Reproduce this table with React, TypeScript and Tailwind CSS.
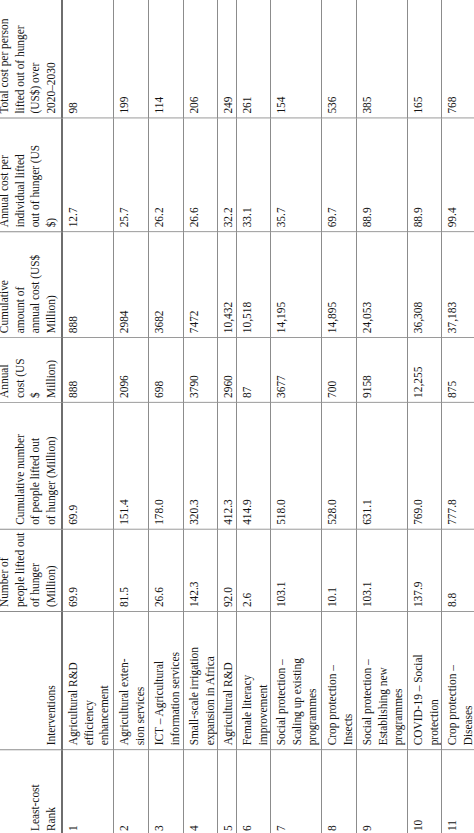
// Least-cost interventions table, printed sideways (rotated a quarter turn counter-clockwise)

const HEADERS: string[][] = [
  ["Least-cost", "Rank"],
  ["Interventions"],
  ["Number of", "people lifted out", "of hunger", "(Million)"],
  ["Cumulative number", "of people lifted out", "of hunger (Million)"],
  ["Annual", "cost (US", "$", "Million)"],
  ["Cumulative", "amount of", "annual cost (US$", "Million)"],
  ["Annual cost per", "individual lifted", "out of hunger (US", "$)"],
  ["Total cost per person", "lifted out of hunger", "(US$) over", "2020–2030"],
];

type Row = [string, string[], string, string, string, string, string, string];

const ROWS: Row[] = [
  ["1", ["Agricultural R&D", "efficiency", "enhancement"], "69.9", "69.9", "888", "888", "12.7", "98"],
  ["2", ["Agricultural exten-", "sion services"], "81.5", "151.4", "2096", "2984", "25.7", "199"],
  ["3", ["ICT – Agricultural", "information services"], "26.6", "178.0", "698", "3682", "26.2", "114"],
  ["4", ["Small-scale irrigation", "expansion in Africa"], "142.3", "320.3", "3790", "7472", "26.6", "206"],
  ["5", ["Agricultural R&D"], "92.0", "412.3", "2960", "10,432", "32.2", "249"],
  ["6", ["Female literacy", "improvement"], "2.6", "414.9", "87", "10,518", "33.1", "261"],
  ["7", ["Social protection –", "Scaling up existing", "programmes"], "103.1", "518.0", "3677", "14,195", "35.7", "154"],
  ["8", ["Crop protection –", "Insects"], "10.1", "528.0", "700", "14,895", "69.7", "536"],
  ["9", ["Social protection –", "Establishing new", "programmes"], "103.1", "631.1", "9158", "24,053", "88.9", "385"],
  ["10", ["COVID-19 – Social", "protection"], "137.9", "769.0", "12,255", "36,308", "88.9", "165"],
  ["11", ["Crop protection –", "Diseases"], "8.8", "777.8", "875", "37,183", "99.4", "768"],
];

// widths are pre-scale: the print is a little condensed along the text direction
const cell = "pl-[4.5px] pr-1 whitespace-nowrap overflow-hidden";

export default function App() {
  return (
    <div className="relative w-[474px] h-[833px] overflow-hidden bg-white font-['Liberation_Serif',serif] text-[13px] leading-[15.5px] text-[#141414]">
      <div className="absolute left-[-5px] top-[835px] origin-top-left -rotate-90 scale-x-[0.875] w-[979px]">
        <div className="grid grid-cols-[97px_158px_94px_145px_74px_121px_130px_160px] grid-rows-[68px_50px_35px_35px_34px_19px_34px_51px_35px_51px_34px_40px]">
          {/* header */}
          {HEADERS.map((lines, c) => (
            <div
              key={`h${c}`}
              className={`${cell} flex flex-col justify-end pb-[3px] border-b-2 border-b-[#6e6e6e] ${c > 0 ? "border-l border-l-[#8c8c8c]" : ""}`}
            >
              {lines.map((l) => (
                <span key={l}>{l}</span>
              ))}
            </div>
          ))}

          {/* body */}
          {ROWS.map((row, r) =>
            row.map((v, c) => (
              <div
                key={`${r}-${c}`}
                className={`${cell} pt-[2px] ${c > 0 ? "border-l border-l-[#8c8c8c]" : ""} ${r > 0 ? "border-t border-t-[#8c8c8c]" : ""}`}
              >
                {Array.isArray(v) ? v.map((l) => <div key={l}>{l}</div>) : v}
              </div>
            ))
          )}
        </div>
      </div>
    </div>
  );
}
